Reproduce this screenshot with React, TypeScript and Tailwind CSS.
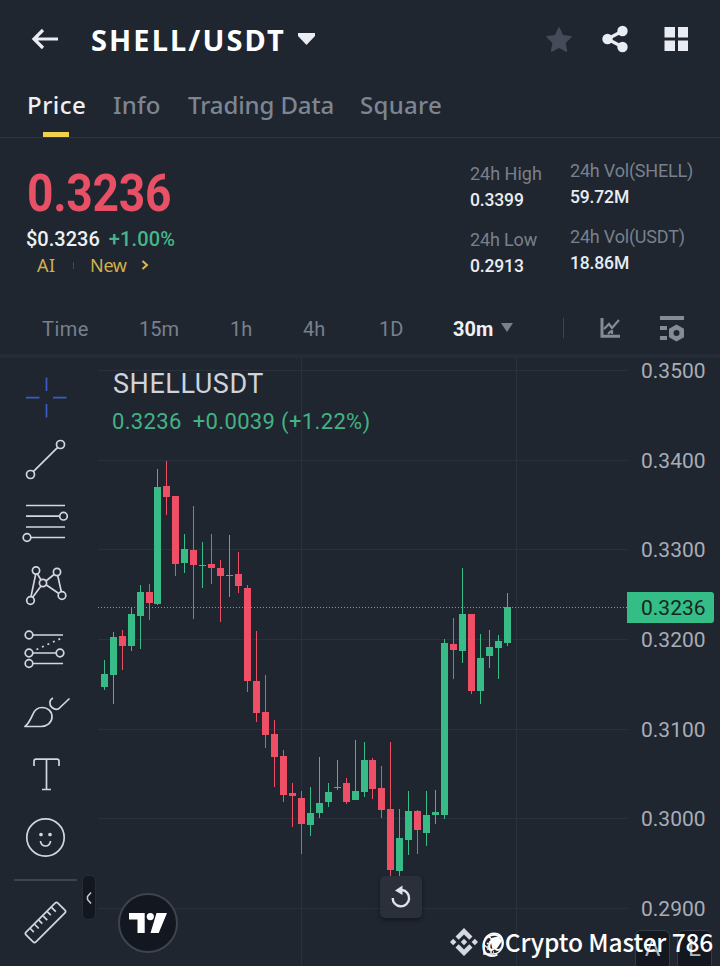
import React from 'react';

// [left, high, bodyTop, bodyBottom, low, rising]
type Candle = [number, number, number, number, number, 0 | 1];

const candles: Candle[] = [
  [101, 660, 674, 687, 690, 1], [110, 632, 637, 675, 704, 1], [119, 630, 636, 646, 670, 0],
  [128, 608, 614, 646, 651, 1], [137, 585, 592, 616, 649, 1], [146, 584, 592, 603, 620, 0],
  [154, 469, 487, 604, 605, 1], [163, 461, 486, 497, 515, 0], [172, 496, 496, 564, 576, 0],
  [181, 534, 549, 563, 573, 1], [190, 506, 550, 565, 619, 0], [199, 542, 565, 566, 588, 1],
  [208, 534, 564, 568, 584, 0], [217, 560, 568, 576, 622, 0], [226, 535, 575, 576, 597, 1],
  [235, 552, 574, 586, 593, 0], [244, 585, 588, 681, 692, 0], [253, 631, 681, 713, 722, 0],
  [262, 675, 712, 735, 748, 0], [271, 720, 734, 757, 787, 0], [280, 750, 756, 795, 802, 0],
  [289, 783, 793, 796, 827, 0], [298, 791, 798, 824, 854, 0], [307, 787, 813, 825, 836, 1],
  [316, 757, 803, 813, 818, 1], [325, 783, 792, 802, 807, 1], [334, 760, 787, 788, 790, 1],
  [343, 778, 783, 802, 804, 0], [352, 740, 791, 800, 800, 1], [361, 742, 760, 792, 797, 1],
  [369, 758, 760, 789, 799, 0], [378, 766, 788, 810, 818, 0], [387, 742, 809, 870, 876, 0],
  [396, 809, 838, 871, 876, 1], [405, 791, 811, 840, 855, 1], [414, 810, 811, 830, 854, 0],
  [423, 791, 815, 833, 846, 1], [432, 790, 812, 815, 824, 1], [441, 639, 643, 815, 819, 1],
  [450, 618, 644, 650, 679, 0], [459, 568, 614, 651, 663, 1], [468, 614, 614, 691, 694, 0],
  [477, 634, 658, 691, 704, 1], [486, 630, 647, 656, 668, 1], [495, 635, 641, 648, 679, 1],
  [504, 593, 607, 643, 646, 1],
];

const gridRows = [370, 460, 549, 639, 729, 818, 908];
const axisLabels = ['0.3500', '0.3400', '0.3300', '0.3200', '0.3100', '0.3000', '0.2900'];

function Chart() {
  return (
    <svg width="529" height="608" viewBox="98 358 529 608" shapeRendering="crispEdges">
      {gridRows.map((y) => (
        <rect key={y} x="98" y={y} width="529" height="1" fill="#2a313b" />
      ))}
      <rect x="301" y="358" width="1" height="608" fill="#2a313b" />
      <rect x="516" y="358" width="1" height="608" fill="#2a313b" />
      {candles.map(([x, high, top, bottom, low, up]) => (
        <g key={x} fill={up ? '#37bb87' : '#ef4f64'}>
          <rect x={x + 3} y={high} width="1" height={low - high} />
          <rect x={x} y={top} width="7" height={bottom - top} />
        </g>
      ))}
      <line x1="98" y1="607.5" x2="627" y2="607.5" stroke="#6fa596" strokeDasharray="1 2" />
    </svg>
  );
}

function Tool({ children, color = '#d3d6de' }: { children: React.ReactNode; color?: string }) {
  return (
    <svg className="h-[63px] w-[50px] shrink-0" viewBox="-25 -31.5 50 63" fill="none" stroke={color} strokeWidth="1.7">
      {children}
    </svg>
  );
}

function Toolbar() {
  return (
    <div className="flex w-[98px] shrink-0 flex-col pt-2 pl-[21px]">
      <Tool color="#3c5cc4">
        <path d="M.5-20v13.500M.5 6.500v13.500M-20 .2h13.500M7 .2h13.500" />
      </Tool>
      <Tool>
        <circle cx="14.500" cy="-16" r="4" />
        <circle cx="-15.500" cy="14" r="4" />
        <path d="M11.700-13.200l-24.400 24.400" />
      </Tool>
      <Tool>
        <path d="M-20-18h39M-20-7.300h33.500M-20 3.500h39M-15 14h34" />
        <circle cx="17.500" cy="-7.300" r="3.800" />
        <circle cx="-19" cy="14" r="3.800" />
      </Tool>
      <Tool>
        <circle cx="-10" cy="-16" r="3.600" />
        <circle cx="11" cy="-14.500" r="3.600" />
        <circle cx="-3" cy="-3.500" r="3.600" />
        <circle cx="-15.500" cy="14" r="3.800" />
        <circle cx="16" cy="9" r="3.800" />
        <path d="M-8.500-12.500l3.500 6M0-5.500l8-6.500M11.700-11l3.700 16.500M0-1.700l12.500 8.500M-5-.500l-8.500 11.500M-10.300-12.300l-4.700 22.500" />
      </Tool>
      <Tool>
        <circle cx="-17" cy="-14.500" r="3.800" />
        <circle cx="-17" cy="3.500" r="3.800" />
        <circle cx="14" cy="3.500" r="3.800" />
        <circle cx="-17" cy="14" r="3.800" />
        <path d="M-13-14.500h30M-13 3.500h23M-13 14h30" />
        <path d="M-9.500 0L16-11.500" strokeDasharray="2 4" />
      </Tool>
      <Tool>
        <path d="M-21 14c4-3 6-8 8-12.500C-11-3-8-5-4-5C2-5 6-1 6 4.500S1 14-5 14z" strokeLinejoin="round" />
        <path d="M7-14.500c-4 2-4 7-1 9.500s6 2.500 8 0l9.500-9" />
      </Tool>
      <Tool>
        <path d="M-12-9.500v-4.500q0-2.300 2-2.300h21q2 0 2 2.300v4.500M.500-16.300v30M-4 14h9" />
      </Tool>
      <Tool>
        <circle cx="-.5" cy="-1" r="18.700" />
        <circle cx="-5" cy="-4" r="1" fill="#d3d6de" />
        <circle cx="4" cy="-4" r="1" fill="#d3d6de" />
        <path d="M-5.500 2.500a5 5 0 0 0 10 0" />
      </Tool>
      <div className="mt-[9px] -ml-[7px] h-[2px] w-[63px] shrink-0 bg-[#3e444f]" />
      <div className="mt-[10px] h-[63px]">
        <Tool>
          <g transform="translate(-.5 0) rotate(-45)">
            <rect x="-22.500" y="-7" width="45" height="14" rx="2" />
            <path d="M-15-6.500v5M-9-6.500v6M-3-6.500v5M3-6.500v6M9-6.500v5M15-6.500v6" />
          </g>
        </Tool>
      </div>
    </div>
  );
}

function Stat({ label, value, labelClass = '' }: { label: string; value: string; labelClass?: string }) {
  return (
    <div className="h-[66px] whitespace-nowrap">
      <div className={`h-[26px] text-[18px] leading-[26px] text-[#79808c] ${labelClass}`}>{label}</div>
      <div className="h-[26px] text-[17.500px] leading-[26px] font-medium tracking-[-0.150px] text-[#e9ecf1]">{value}</div>
    </div>
  );
}

export default function App() {
  return (
    <div className="relative flex h-[966px] w-[720px] flex-col overflow-hidden bg-[#1f2630] font-['Roboto',sans-serif]">
      <header className="flex h-20 shrink-0 items-center pl-[31px]">
        <svg width="28" height="22" viewBox="0 0 28 22" fill="none" stroke="#e9ecf2" strokeWidth="3.200" className="-mt-[3px]">
          <path d="M27 11H3M12 2L3 11l9 9" />
        </svg>
        <h1 className="ml-8 w-[207px] font-['Noto_Sans',sans-serif] text-[29px] font-bold tracking-[2.100px] whitespace-nowrap text-white">SHELL/USDT</h1>
        <svg width="17" height="14" viewBox="0 0 17 14" className="-mt-[3px] shrink-0"><path d="M0 1h17v3l-8.500 9L0 4z" fill="#e9ecf2" /></svg>
        <svg width="28" height="28" viewBox="0 0 28 28" className="ml-[230px] shrink-0">
          <path d="M14 2l3.600 7.700 8.400 1.100-6.200 5.900 1.600 8.400L14 21l-7.400 4.100 1.600-8.400L2 10.800l8.400-1.100z" fill="#454b59" stroke="#454b59" strokeWidth="1.500" strokeLinejoin="round" />
        </svg>
        <svg width="26" height="28" viewBox="0 0 26 28" className="-mt-[3px] ml-[29px] shrink-0">
          <path d="M20.500 6L5.500 14l15 8" stroke="#e9ecf2" strokeWidth="3.200" fill="none" />
          <g fill="#e9ecf2"><circle cx="20.500" cy="6" r="5.200" /><circle cx="5.500" cy="14" r="5.200" /><circle cx="20.500" cy="22" r="5.200" /></g>
        </svg>
        <svg width="24" height="24" viewBox="0 0 24 24" className="-mt-[3px] ml-9 shrink-0" fill="#e9ecf2">
          <path d="M.5 0H11v10.500H.5zM14 0h10.500v10.500H14zM.5 13.500H11V24H.5zM14 13.500h10.500V24H14z" />
        </svg>
      </header>

      <nav className="flex h-[58px] shrink-0 border-b border-[#303641] pl-[27px] font-['Noto_Sans',sans-serif] text-[24px] leading-[50px] font-medium whitespace-nowrap text-[#7e8592]">
        <div className="flex w-[86px] flex-col text-[#eef0f4]">
          <span className="h-[52px] tracking-[0.500px]">Price</span>
          <span className="ml-4 h-[5px] w-[26px] bg-[#f0d14c]" />
        </div>
        <span className="w-[75px] tracking-[0.200px]">Info</span>
        <span className="w-[172px] tracking-[-0.100px]">Trading Data</span>
        <span className="tracking-[0.300px]">Square</span>
      </nav>

      <section className="flex h-[162px] shrink-0">
        <div className="w-[470px] pt-[27px] pl-[27px]">
          <div className="h-[60px] origin-left scale-x-[0.905] text-[51px] leading-[57px] font-bold tracking-[-0.300px] text-[#e85065]">0.3236</div>
          <div className="flex h-7 items-center gap-[9px] text-[20px] font-medium">
            <span className="-ml-px text-[#eef0f4]">$0.3236</span>
            <span className="tracking-[0.150px] text-[#44b68a]">+1.00%</span>
          </div>
          <div className="flex h-6 items-center pl-[10px] font-['Noto_Sans',sans-serif] text-[18px] text-[#d1b04c]">
            <span className="w-9 tracking-[0.500px]">AI</span>
            <span className="h-[7px] w-px bg-[#474b50]" />
            <span className="ml-4 w-[36px] tracking-[-0.300px]">New</span>
            <svg width="8" height="10" viewBox="0 0 8 10" className="ml-[15px]" fill="none" stroke="#e0b94a" strokeWidth="2"><path d="M1.500 1l4.500 4-4.500 4" /></svg>
          </div>
        </div>
        <div className="w-[100px] pt-[23px]">
          <Stat label="24h High" value="0.3399" />
          <Stat label="24h Low" value="0.2913" labelClass="tracking-[-0.150px]" />
        </div>
        <div className="pt-5">
          <Stat label="24h Vol(SHELL)" value="59.72M" labelClass="tracking-[-0.200px]" />
          <Stat label="24h Vol(USDT)" value="18.86M" labelClass="tracking-[-0.200px]" />
        </div>
      </section>

      <nav className="flex h-[54px] shrink-0 items-center pt-1 pl-[42px] text-[20px] whitespace-nowrap text-[#79808c]">
        <span className="w-[97px] tracking-[0.5px]">Time</span>
        <span className="w-[91px]">15m</span>
        <span className="w-[73px]">1h</span>
        <span className="w-[76px]">4h</span>
        <span className="w-[74px]">1D</span>
        <span className="w-12 font-bold text-[#eef0f4]">30m</span>
        <svg width="12" height="9" viewBox="0 0 12 9" fill="#79808c" className="-mt-[3px]"><path d="M0 0h12L6 9z" /></svg>
        <span className="-mt-[3px] ml-[50px] h-5 w-px bg-[#3e4550]" />
        <svg width="20" height="20" viewBox="0 0 20 20" className="-mt-[3px] ml-9" fill="none" stroke="#858b96" strokeWidth="3">
          <path d="M2 0v18.200h18" />
          <path d="M4 11l5-5 3 4 7-8M12 12v4M8 16l3-3" strokeWidth="2.200" />
        </svg>
        <svg width="25" height="26" viewBox="0 0 25 26" className="-mt-px ml-10">
          <path d="M0 0h24v4H0zM0 10h7v4H0zM0 20h7v4H0z" fill="#858b96" />
          <path fillRule="evenodd" d="M16.500 8.500l7.500 4.300v8.400l-7.500 4.300-7.500-4.300v-8.400zM16.500 14a3 3 0 1 0 0 6 3 3 0 0 0 0-6z" fill="#858b96" />
        </svg>
      </nav>
      <div className="h-1 shrink-0 bg-[#252c37]" />

      <main className="relative flex flex-1 overflow-hidden">
        <Toolbar />
        <Chart />
        <aside className="flex h-[561px] flex-col justify-between pt-[3px] pl-[14px] text-[21px] leading-5 text-[#a9adb7]">
          {axisLabels.map((t) => <span key={t}>{t}</span>)}
        </aside>
        <div className="absolute top-[11px] left-[113px] text-[27px] leading-[30px] tracking-[0.550px] text-[#cfd3dc]">SHELLUSDT</div>
        <div className="absolute top-[51px] left-[112px] text-[22px] leading-[26px] tracking-[0.350px] whitespace-pre text-[#44b284]">
          <span>0.3236</span><span className="ml-[11px]">+0.0039 (+1.22%)</span>
        </div>
        <div className="absolute top-[234px] left-[627px] h-[31px] w-[87px] rounded-r-[3px] bg-[#34bd87] pl-[14px] text-[21px] leading-[32px] text-[#17261f]">0.3236</div>

        <div className="absolute top-[517px] left-[82px] flex h-[45px] w-[14px] items-center justify-center rounded-[6px] border border-[#272c36] bg-[#121720]">
          <svg width="6" height="12" viewBox="0 0 6 12" fill="none" stroke="#c5c9d2" strokeWidth="1.500" className="shrink-0"><path d="M5 .500L1.500 4.500v3L5 11.500" /></svg>
        </div>
        <div className="absolute top-[535px] left-[118px] flex size-[60px] items-center justify-center rounded-full border-2 border-[#3f434e] bg-[#121720]">
          <svg width="38" height="20" viewBox="0 0 38 20" fill="white"><path d="M0 0h15.700v20H8.500V6.500H0zM27.500 0H38l-8.300 20H21.500z" /><circle cx="21.300" cy="3.600" r="3.600" /></svg>
        </div>
        <div className="absolute top-[518px] left-[380px] flex size-[42px] items-center justify-center rounded-[5px] bg-[#2a2f3a] shadow-[0_2px_4px_rgba(0,0,0,0.4)]">
          <svg width="22" height="24" viewBox="0 0 22 24" fill="none" stroke="#dfe2ea" strokeWidth="2.400"><path d="M2.700 13a8.200 8.200 0 1 0 9.300-8" /><path d="M5 5.500L12.500.5v9.500z" fill="#dfe2ea" stroke="none" /></svg>
        </div>
        <div className="absolute top-[572px] left-[635px] flex gap-[7px] text-[24px] leading-[34px] text-[#b2b6bf]">
          <span className="h-10 w-[35px] rounded-[6px] border border-[#353a45] bg-[#121720] text-center">A</span>
          <span className="h-10 w-[35px] rounded-[6px] border border-[#353a45] bg-[#121720] text-center">L</span>
        </div>
        <div className="absolute top-[566px] left-[450px] flex h-9 items-center font-['Noto_Sans_CJK_SC',sans-serif] text-[24.500px] font-medium tracking-[-0.130px] whitespace-nowrap text-white">
          <svg width="28" height="28" viewBox="0 0 28 28" fill="#d5d8e0" className="shrink-0">
            <path d="M14 0l8.500 8.500-3.200 3.200L14 6.400l-5.300 5.300-3.200-3.200zM14 28l8.500-8.500-3.200-3.200-5.300 5.300-5.300-5.300-3.200 3.200zM14 10.800l3.200 3.200-3.200 3.200-3.200-3.200zM3.200 10.800L6.400 14l-3.200 3.200L0 14zM24.800 10.800L28 14l-3.200 3.200-3.200-3.200z" />
          </svg>
          <span className="relative ml-[3px]">@Crypto Master 786
            <svg width="22" height="24" viewBox="0 0 22 24" className="absolute top-[8px] left-px" fill="none" stroke="white" strokeWidth="1.500">
              <path d="M2 22V10C3 3 10 0 16 2c5 2 6 9 4 14-2 4-5 6-9 6z" />
              <path d="M9 7l7-2 3 4-4 6-4 1z" fill="white" />
              <path d="M2 14h3v3h3v3h4M7 5l5 3M5 12l4-3" strokeDasharray="2 1" />
            </svg>
          </span>
        </div>
      </main>
    </div>
  );
}
